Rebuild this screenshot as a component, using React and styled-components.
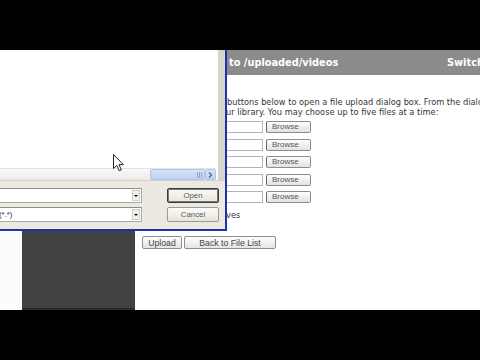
import React from 'react';
import styled, { createGlobalStyle } from 'styled-components';

const GlobalStyle = createGlobalStyle`
  html, body {
    margin: 0;
    padding: 0;
    background: #000;
  }
  body {
    width: 480px;
    height: 360px;
    overflow: hidden;
  }
`;

const Screen = styled.div`
  width: 480px;
  height: 360px;
  background: #000;
  display: flex;
  flex-direction: column;
  justify-content: center;
`;

const Viewport = styled.div`
  position: relative;
  height: 260px;
  overflow: hidden;
  background: #fff;
`;

const Page = styled.div`
  display: grid;
  grid-template-columns: 22px 113px 1fr;
  height: 100%;
`;

const Gutter = styled.div`
  background: #fcfcfc;
`;

const Sidebar = styled.div`
  background: #424242;
  border-bottom: 2px solid #2c2c2c;
`;

const Content = styled.div`
  min-width: 0;
  overflow: hidden;
  font-family: "DejaVu Sans", Verdana, sans-serif;
  color: #363636;
`;

const Header = styled.div`
  height: 25px;
  background: #8b8b8b;
  color: #fff;
  font-weight: bold;
  font-size: 9.8px;
  display: grid;
  grid-template-columns: 218px auto;
  align-items: center;
  padding-left: 94px;
  white-space: nowrap;
  overflow: hidden;
`;

const Body = styled.div`
  padding: 22px 0 0 7px;
`;

const Intro = styled.p`
  margin: 0 0 4px 85px;
  font-size: 8.25px;
  line-height: 10px;
  white-space: nowrap;
`;

const IntroLine = styled.span`
  display: block;
  margin-left: ${p => p.$shift || 0}px;
`;

const FileList = styled.div`
  display: flex;
  flex-direction: column;
  gap: 5.5px;
`;

const FileRow = styled.div`
  display: flex;
  align-items: center;
  gap: 3px;
  height: 12px;
`;

const PathField = styled.input`
  width: 121px;
  height: 12px;
  box-sizing: border-box;
  margin: 0;
  padding: 0;
  border: 1px solid #b4b4b4;
  background: #fff;
`;

const BrowseButton = styled.button`
  width: 45px;
  height: 12px;
  box-sizing: border-box;
  margin: 0;
  padding: 0 0 0 5px;
  border: 1px solid #8c8c8c;
  border-left-color: #666;
  border-radius: 2px;
  background: linear-gradient(#fdfdfd, #e2e2e2);
  font-family: "Liberation Sans", Arial, sans-serif;
  font-size: 8px;
  line-height: 10px;
  color: #555;
  text-align: left;
`;

const OptionLine = styled.div`
  margin: 7px 0 0 84px;
  font-size: 8.25px;
  line-height: 10px;
`;

const Actions = styled.div`
  display: flex;
  gap: 2px;
  margin-top: 16px;
`;

const PageButton = styled.button`
  width: ${p => p.$w}px;
  height: 13px;
  box-sizing: border-box;
  margin: 0;
  padding: 0;
  border: 1px solid #8e8e8e;
  border-radius: 2px;
  background: linear-gradient(#fefefe, #e4e4e4);
  font-family: "Liberation Sans", Arial, sans-serif;
  font-size: 8.7px;
  color: #444;
`;

const Dialog = styled.div`
  position: absolute;
  left: -6px;
  top: -10px;
  width: 233px;
  height: 191px;
  box-sizing: border-box;
  border-right: 2px solid #1c32b2;
  border-bottom: 2px solid #1c32b2;
  background: #ebe9e0;
  display: flex;
  flex-direction: column;
`;

const ListPane = styled.div`
  height: 140px;
  margin-right: 7px;
  background: #fff;
  display: flex;
  flex-direction: column;
  justify-content: flex-end;
  box-shadow: 7px 0 0 #d6d4cc;
`;

const HScroll = styled.div`
  height: 12px;
  margin-right: 2px;
  display: flex;
  background: linear-gradient(#f9f9f6, #ecebe6);
  border-top: 1px solid #e4e3de;
  box-sizing: border-box;
`;

const ScrollTrack = styled.div`
  flex: 1;
`;

const ScrollThumb = styled.div`
  width: 55px;
  box-sizing: border-box;
  background: linear-gradient(#d6e2f8, #bfd0f1);
  border: 1px solid #b3c4e8;
  border-radius: 2px;
  display: flex;
  justify-content: flex-end;
  align-items: center;
  gap: 1px;
  padding-right: 2px;
`;

const Grip = styled.span`
  width: 1px;
  height: 6px;
  background: #8ea4d2;
`;

const ScrollArrow = styled.div`
  width: 11px;
  box-sizing: border-box;
  background: linear-gradient(#d6e2f8, #c0d1f2);
  border: 1px solid #b3c4e8;
  border-radius: 2px;
  display: flex;
  align-items: center;
  justify-content: center;
`;

const DialogFooter = styled.div`
  flex: 1;
  box-sizing: border-box;
  border-top: 1px solid #d2d0c6;
  display: grid;
  grid-template-columns: 1fr 52px;
  grid-auto-rows: 15px;
  column-gap: 25px;
  row-gap: 4px;
  align-content: start;
  padding: 7px 6px 0 0;
  font-family: "Liberation Sans", Arial, sans-serif;
`;

const Combo = styled.div`
  box-sizing: border-box;
  background: #fff;
  border: 1px solid #a9a9a4;
  border-top-color: #8e8e88;
  display: flex;
  align-items: center;
  justify-content: space-between;
  padding: 0 1px 0 4px;
  font-size: 7.8px;
  color: #333;
`;

const ComboArrow = styled.span`
  width: 8px;
  height: 11px;
  box-sizing: border-box;
  background: #f1f0ea;
  border: 1px solid #cfcdc4;
  display: flex;
  align-items: center;
  justify-content: center;

  &::after {
    content: '';
    border-left: 2px solid transparent;
    border-right: 2px solid transparent;
    border-top: 2px solid #111;
  }
`;

const DialogButton = styled.button`
  margin: 0;
  padding: 0;
  box-sizing: border-box;
  border: 1px solid ${p => (p.$primary ? '#3a3a3a' : '#9a9a94')};
  box-shadow: ${p => (p.$primary ? 'inset 0 0 0 1px #7a7a76' : 'none')};
  border-radius: 2px;
  background: linear-gradient(#fbfbf9, #e6e4da);
  font-family: "Liberation Sans", Arial, sans-serif;
  font-size: 7.8px;
  color: #5a5a5a;
`;

const Cursor = styled.svg`
  position: absolute;
  left: 113px;
  top: 104px;
`;

const rows = [0, 1, 2, 3, 4];

export default function App() {
  return (
    <>
      <GlobalStyle />
      <Screen>
        <Viewport>
          <Page>
            <Gutter />
            <Sidebar />
            <Content>
              <Header>
                <span>to /uploaded/videos</span>
                <span>Switch to</span>
              </Header>
              <Body>
                <Intro>
                  <IntroLine>buttons below to open a file upload dialog box. From the dialog</IntroLine>
                  <IntroLine $shift={-1}>ur library. You may choose up to five files at a time:</IntroLine>
                </Intro>
                <FileList>
                  {rows.map(i => (
                    <FileRow key={i}>
                      <PathField readOnly />
                      <BrowseButton>Browse</BrowseButton>
                    </FileRow>
                  ))}
                </FileList>
                <OptionLine>ves</OptionLine>
                <Actions>
                  <PageButton $w={40}>Upload</PageButton>
                  <PageButton $w={92}>Back to File List</PageButton>
                </Actions>
              </Body>
            </Content>
          </Page>

          <Dialog>
            <ListPane>
              <HScroll>
                <ScrollTrack />
                <ScrollThumb>
                  <Grip />
                  <Grip />
                  <Grip />
                </ScrollThumb>
                <ScrollArrow>
                  <svg width="5" height="6" viewBox="0 0 5 6">
                    <path d="M1 0.5 L3.5 3 L1 5.5" fill="none" stroke="#4a5f8c" strokeWidth="1.2" />
                  </svg>
                </ScrollArrow>
              </HScroll>
            </ListPane>
            <DialogFooter>
              <Combo>
                <span />
                <ComboArrow />
              </Combo>
              <DialogButton $primary>Open</DialogButton>
              <Combo>
                <span>(*.*)</span>
                <ComboArrow />
              </Combo>
              <DialogButton>Cancel</DialogButton>
            </DialogFooter>
          </Dialog>

          <Cursor width="12" height="18" viewBox="0 0 12 18">
            <path
              d="M0.5 0.5 L0.5 14.5 L3.8 11.4 L6.2 16.8 L8.3 15.9 L6 10.6 L10.3 10.6 Z"
              fill="#fff"
              stroke="#222"
              strokeWidth="1"
              strokeLinejoin="round"
            />
          </Cursor>
        </Viewport>
      </Screen>
    </>
  );
}
